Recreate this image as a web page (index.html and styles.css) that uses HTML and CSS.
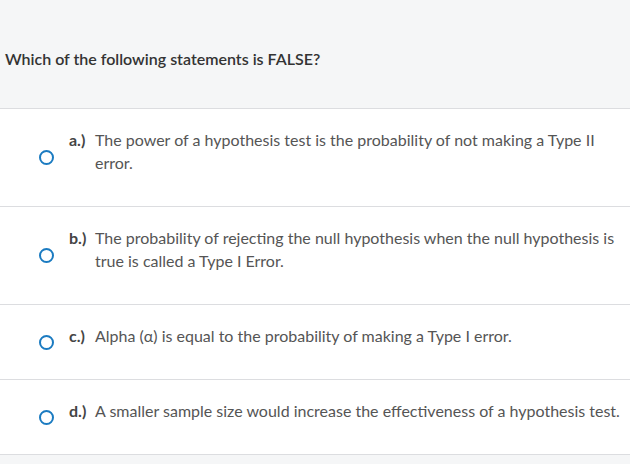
FILE: index.html
```html
<!DOCTYPE html>
<html>
<head>
<meta charset="utf-8">
<link rel="stylesheet" href="styles.css">
</head>
<body>
<div class="question">
  <div class="prompt">Which of the following statements is FALSE?</div>
  <ul class="options">
    <li class="option">
      <span class="radio"></span>
      <div class="body">
        <span class="label">a.)</span>
        <span class="text">The power of a hypothesis test is the probability of not making a Type II error.</span>
      </div>
    </li>
    <li class="option">
      <span class="radio"></span>
      <div class="body">
        <span class="label">b.)</span>
        <span class="text">The probability of rejecting the null hypothesis when the null hypothesis is true is called a Type I Error.</span>
      </div>
    </li>
    <li class="option">
      <span class="radio"></span>
      <div class="body">
        <span class="label">c.)</span>
        <span class="text">Alpha (α) is equal to the probability of making a Type I error.</span>
      </div>
    </li>
    <li class="option">
      <span class="radio"></span>
      <div class="body">
        <span class="label">d.)</span>
        <span class="text">A smaller sample size would increase the effectiveness of a hypothesis test.</span>
      </div>
    </li>
  </ul>
</div>
</body>
</html>
```
FILE: styles.css
```css
html, body {
  margin: 0;
  padding: 0;
  background: #f5f6f7;
  font-family: "Lato", "Liberation Sans", sans-serif;
}
.question {
  width: 630px;
}
.prompt {
  box-sizing: border-box;
  height: 109px;
  padding: 49px 5px 0;
  font-size: 16px;
  line-height: 20px;
  font-weight: 600;
  color: #333;
  border-bottom: 1px solid #dcdde0;
}
.options {
  list-style: none;
  margin: 0;
  padding: 0;
  background: #fff;
}
.option {
  display: flex;
  align-items: center;
  padding: 0 5px 0 39px;
  border-bottom: 1px solid #dcdde0;
  font-size: 16px;
  line-height: 23px;
  color: #555;
}
.radio {
  flex: none;
  width: 11px;
  height: 11px;
  border: 2.5px solid #1b7bc1;
  border-radius: 50%;
  margin-right: 15px;
}
.body {
  flex: 1;
  display: flex;
  padding: 19px 0 32px;
}
.label {
  flex: none;
  width: 26px;
  font-weight: 700;
  color: #444;
}
.text {
  flex: 1;
}
```
